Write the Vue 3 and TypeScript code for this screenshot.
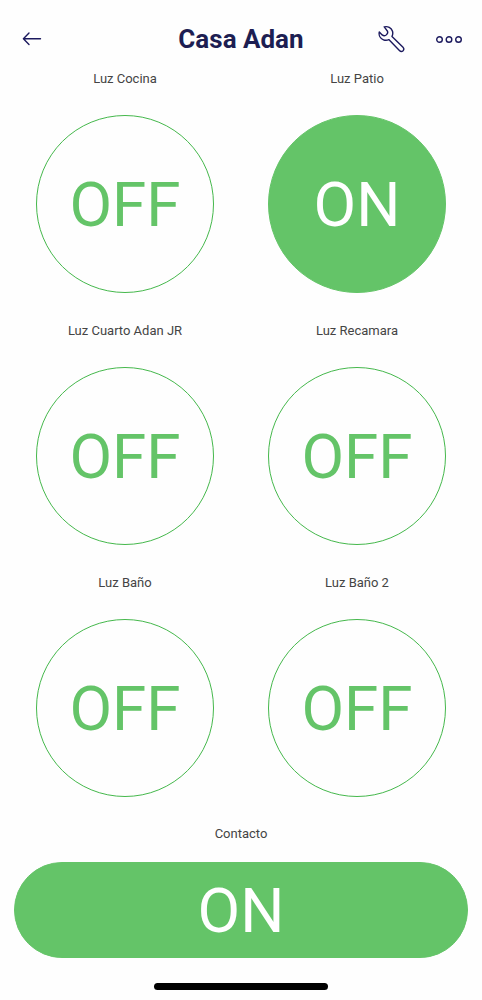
<script setup lang="ts">
import { reactive } from 'vue'

interface Switch {
  id: string
  label: string
  on: boolean
}

const lights = reactive<Switch[]>([
  { id: 'cocina', label: 'Luz Cocina', on: false },
  { id: 'patio', label: 'Luz Patio', on: true },
  { id: 'cuarto', label: 'Luz Cuarto Adan JR', on: false },
  { id: 'recamara', label: 'Luz Recamara', on: false },
  { id: 'bano', label: 'Luz Baño', on: false },
  { id: 'bano2', label: 'Luz Baño 2', on: false },
])

const outlet = reactive<Switch>({ id: 'contacto', label: 'Contacto', on: true })

function toggle(item: Switch): void {
  item.on = !item.on
}
</script>

<template>
  <div class="screen">
    <header class="bar">
      <div class="side">
        <button class="icon" type="button" aria-label="Atrás">
          <svg width="24" height="16" viewBox="0 0 24 16">
            <path d="M21.5 7.7H4.4M10 2L4.4 7.7l5.6 5.7" />
          </svg>
        </button>
      </div>
      <h1 class="title">Casa Adan</h1>
      <div class="side end">
        <button class="icon" type="button" aria-label="Configurar">
          <svg width="28" height="28" viewBox="0 0 28 28">
            <path d="M6.2 1.9C9.8 0.9 13.4 2.8 14.5 6.2C15 8 14.8 9.8 14 11.4L25 22.2C26 23.3 26 24.7 25.1 25.7C24.1 26.7 22.5 26.7 21.4 25.6L10.8 14.6C9.2 15.4 7.3 15.5 5.5 14.8C2.3 13.6 0.5 10.3 1.3 7L4.2 9.9C5.5 11 7.5 10.8 8.6 9.6C9.8 8.4 9.9 6.5 8.8 5.2L6.2 1.9Z" />
          </svg>
        </button>
        <button class="icon" type="button" aria-label="Más opciones">
          <svg width="28" height="12" viewBox="0 0 28 12">
            <circle cx="4.5" cy="6.5" r="2.8" />
            <circle cx="14" cy="6.5" r="2.8" />
            <circle cx="23.5" cy="6.5" r="2.8" />
          </svg>
        </button>
      </div>
    </header>

    <main class="content">
      <section class="grid">
        <div v-for="light in lights" :key="light.id" class="cell">
          <span :id="light.id" class="label">{{ light.label }}</span>
          <button
            class="switch round"
            :class="{ on: light.on }"
            type="button"
            :aria-labelledby="light.id"
            :aria-pressed="light.on"
            @click="toggle(light)"
          >
            {{ light.on ? 'ON' : 'OFF' }}
          </button>
        </div>
      </section>

      <section class="wide">
        <span :id="outlet.id" class="label">{{ outlet.label }}</span>
        <button
          class="switch pill"
          :class="{ on: outlet.on }"
          type="button"
          :aria-labelledby="outlet.id"
          :aria-pressed="outlet.on"
          @click="toggle(outlet)"
        >
          {{ outlet.on ? 'ON' : 'OFF' }}
        </button>
      </section>
    </main>

    <div class="home"></div>
  </div>
</template>

<style>
body {
  margin: 0;
  background: #fefefe;
}
</style>

<style scoped>
.screen {
  display: flex;
  flex-direction: column;
  box-sizing: border-box;
  min-height: 100vh;
  padding-bottom: 10px;
  font-family: Roboto, "Liberation Sans", sans-serif;
  background: #fefefe;
}

.bar {
  display: grid;
  grid-template-columns: 1fr auto 1fr;
  align-items: center;
  height: 49px;
  padding: 14px 19px 6px;
}

.side {
  display: flex;
  align-items: center;
}

.end {
  justify-content: flex-end;
  gap: 29px;
}

.icon {
  display: flex;
  padding: 0;
  border: 0;
  background: none;
  cursor: pointer;
}

.icon svg {
  display: block;
  fill: none;
  stroke: #1c1a5e;
  stroke-width: 1.4;
  stroke-linecap: round;
  stroke-linejoin: round;
}

.title {
  margin: 0;
  font-size: 26px;
  font-weight: 700;
  line-height: 32px;
  color: #1d1e52;
}

.content {
  display: flex;
  flex-direction: column;
  gap: 27px;
}

.grid {
  display: grid;
  grid-template-columns: 1fr 1fr;
  row-gap: 28px;
  padding: 0 9px;
}

.cell {
  display: flex;
  flex-direction: column;
  align-items: center;
  gap: 26px;
}

.label {
  font-size: 13px;
  line-height: 20px;
  color: #444;
}

.switch {
  box-sizing: border-box;
  padding: 2px 0 0;
  border: 1px solid #45b84c;
  font-family: inherit;
  font-size: 62px;
  line-height: 74px;
  color: #64c468;
  background: transparent;
  cursor: pointer;
}

.switch.on {
  border-color: #64c468;
  color: #fff;
  background: #64c468;
}

.round {
  width: 178px;
  height: 178px;
  border-radius: 50%;
}

.wide {
  display: flex;
  flex-direction: column;
  align-items: center;
  gap: 18px;
  padding: 0 14px;
}

.pill {
  width: 100%;
  height: 96px;
  border-radius: 48px;
}

.home {
  width: 36%;
  height: 7px;
  margin: auto auto 0;
  border-radius: 4px;
  background: #000;
}
</style>
